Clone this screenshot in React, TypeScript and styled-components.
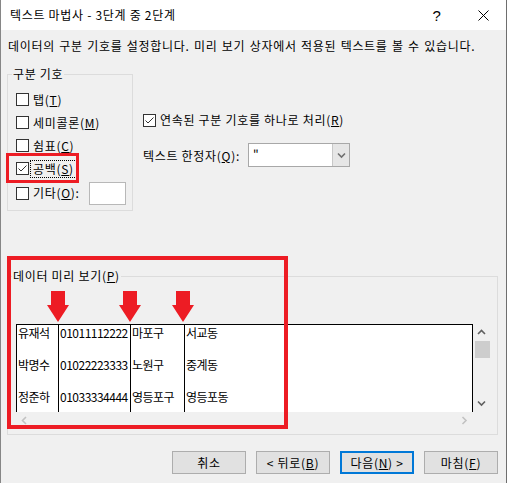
import React from "react";
import styled, { createGlobalStyle } from "styled-components";

const GlobalStyle = createGlobalStyle`
  html, body {
    margin: 0;
    padding: 0;
    background: #ffffff;
  }

  body {
    font-family: "Noto Sans CJK KR", "Noto Sans", sans-serif;
    font-size: 12px;
    letter-spacing: 0.7px;
    color: #000000;
  }

  * {
    box-sizing: border-box;
  }
`;

const columns = [
  { width: 42, cells: ["유재석", "박명수", "정준하"] },
  { width: 72, cells: ["01011112222", "01022223333", "01033334444"] },
  { width: 54, cells: ["마포구", "노원구", "영등포구"] },
  { width: 0, cells: ["서교동", "중계동", "영등포동"] },
];

const arrowCenters = [58, 130, 183];

function CheckBox({ checked }: { checked?: boolean }) {
  return (
    <Box>
      {checked && (
        <svg width="11" height="11" viewBox="0 0 11 11">
          <path d="M1.5 5.5 L4 8 L9.5 2.5" fill="none" stroke="#333" strokeWidth="1" />
        </svg>
      )}
    </Box>
  );
}

function Chevron({ dir, color }: { dir: "up" | "down" | "left" | "right"; color: string }) {
  const paths = {
    up: "M1 5 L4.5 1.5 L8 5",
    down: "M1 1.5 L4.5 5 L8 1.5",
    left: "M5 1 L1.5 4.5 L5 8",
    right: "M1.5 1 L5 4.5 L1.5 8",
  };
  const vertical = dir === "up" || dir === "down";
  return (
    <svg width={vertical ? 9 : 7} height={vertical ? 7 : 9} viewBox={vertical ? "0 0 9 7" : "0 0 7 9"}>
      <path d={paths[dir]} fill="none" stroke={color} strokeWidth="1.6" />
    </svg>
  );
}

export default function App() {
  return (
    <>
      <GlobalStyle />
      <Window>
        <TitleBar>
          <Title>텍스트 마법사 - 3단계 중 2단계</Title>
          <TitleButton>?</TitleButton>
          <TitleButton>
            <svg width="11" height="11" viewBox="0 0 11 11">
              <path d="M0.5 0.5 L10.5 10.5 M10.5 0.5 L0.5 10.5" stroke="#000" strokeWidth="1" />
            </svg>
          </TitleButton>
        </TitleBar>

        <Body>
          <Intro>데이터의 구분 기호를 설정합니다. 미리 보기 상자에서 적용된 텍스트를 볼 수 있습니다.</Intro>

          <OptionsRow>
            <GroupBox $width={126}>
              <Legend>구분 기호</Legend>
              <CheckRow>
                <CheckBox />
                <Label>
                  탭(<Key>T</Key>)
                </Label>
              </CheckRow>
              <CheckRow>
                <CheckBox />
                <Label>
                  세미콜론(<Key>M</Key>)
                </Label>
              </CheckRow>
              <CheckRow>
                <CheckBox />
                <Label>
                  쉼표(<Key>C</Key>)
                </Label>
              </CheckRow>
              <CheckRow>
                <CheckBox checked />
                <Label $focused>
                  공백(<Key>S</Key>)
                </Label>
              </CheckRow>
              <CheckRow $tall>
                <CheckBox />
                <Label>
                  기타(<Key>O</Key>):
                </Label>
                <OtherInput />
              </CheckRow>
            </GroupBox>

            <SideColumn>
              <CheckRow $compact>
                <CheckBox checked />
                <Label>
                  연속된 구분 기호를 하나로 처리(<Key>R</Key>)
                </Label>
              </CheckRow>
              <ComboRow>
                <span>
                  텍스트 한정자(<Key>Q</Key>):
                </span>
                <Combo>
                  <ComboValue>"</ComboValue>
                  <ComboButton>
                    <Chevron dir="down" color="#707070" />
                  </ComboButton>
                </Combo>
              </ComboRow>
            </SideColumn>
          </OptionsRow>

          <PreviewGroup>
            <Legend>
              데이터 미리 보기(<Key>P</Key>)
            </Legend>
            <ScrollView>
              <PreviewPane>
                {columns.map((col, i) => (
                  <Column key={i} $width={col.width}>
                    {col.cells.map((cell) => (
                      <Cell key={cell}>{cell}</Cell>
                    ))}
                  </Column>
                ))}
              </PreviewPane>
              <VScroll>
                <ScrollArrow>
                  <Chevron dir="up" color="#606060" />
                </ScrollArrow>
                <Thumb />
                <ScrollArrow>
                  <Chevron dir="down" color="#606060" />
                </ScrollArrow>
              </VScroll>
              <HScroll>
                <Chevron dir="left" color="#c2c2c2" />
                <Chevron dir="right" color="#c2c2c2" />
              </HScroll>
              <Corner />
            </ScrollView>
          </PreviewGroup>

          <ButtonBar>
            <Button>취소</Button>
            <Button>
              &lt; 뒤로(<Key>B</Key>)
            </Button>
            <Button $primary>
              다음(<Key>N</Key>) &gt;
            </Button>
            <Button>
              마침(<Key>F</Key>)
            </Button>
          </ButtonBar>
        </Body>

        <Highlight $left={6} $top={153} $width={73} $height={30} $thickness={3} />
        <Highlight $left={7} $top={256} $width={281} $height={173} $thickness={4} />
        {arrowCenters.map((x) => (
          <Arrow key={x} style={{ left: x - 11 }} width="22" height="31" viewBox="0 0 22 31">
            <polygon points="4,0 18,0 18,14 22,14 11,31 0,14 4,14" fill="#ed1c24" />
          </Arrow>
        ))}
      </Window>
    </>
  );
}

const Window = styled.div`
  position: relative;
  width: 507px;
  height: 483px;
  background: #f0f0f0;
  border-left: 1px solid #868686;
  border-right: 1px solid #6e6e6e;
  overflow: hidden;
`;

const TitleBar = styled.div`
  display: flex;
  align-items: center;
  height: 30px;
  padding-left: 9px;
  background: #ffffff;
`;

const Title = styled.div`
  flex: 1;
  font-size: 12px;
  line-height: 16px;
`;

const TitleButton = styled.div`
  display: flex;
  align-items: center;
  justify-content: center;
  width: 46px;
  height: 30px;
  font-family: "Liberation Sans", sans-serif;
  font-size: 15px;
`;

const Body = styled.div`
  display: flex;
  flex-direction: column;
  padding: 0 8px 0 6px;
`;

const Intro = styled.div`
  margin-top: 8px;
  padding-left: 1px;
  line-height: 16px;
  word-spacing: 1px;
  white-space: nowrap;
`;

const OptionsRow = styled.div`
  display: flex;
  margin-top: 12px;
`;

const GroupBox = styled.fieldset<{ $width: number }>`
  width: ${({ $width }) => $width}px;
  min-width: 0;
  margin: 0;
  padding: 6px 6px 4px 8px;
  border: 1px solid #dcdcdc;
  display: flex;
  flex-direction: column;
`;

const Legend = styled.legend`
  margin-left: -4px;
  padding: 0 1px;
  line-height: 16px;
`;

const CheckRow = styled.div<{ $tall?: boolean; $compact?: boolean }>`
  display: flex;
  align-items: center;
  height: ${({ $tall, $compact }) => ($tall ? 26 : $compact ? 16 : 23)}px;
  white-space: nowrap;
`;

const Box = styled.div`
  display: flex;
  align-items: center;
  justify-content: center;
  flex: none;
  width: 13px;
  height: 13px;
  border: 1px solid #333333;
  background: #ffffff;
`;

const Label = styled.span<{ $focused?: boolean }>`
  margin-left: ${({ $focused }) => ($focused ? 2 : 4)}px;
  padding: ${({ $focused }) => ($focused ? "0 2px" : "0")};
  line-height: 16px;
  outline: ${({ $focused }) => ($focused ? "1px dotted #000" : "none")};
`;

const Key = styled.span`
  text-decoration: underline;
  text-underline-offset: 1px;
`;

const OtherInput = styled.div`
  width: 37px;
  height: 23px;
  margin-left: auto;
  border: 1px solid #b8b8b8;
  background: #ffffff;
`;

const SideColumn = styled.div`
  display: flex;
  flex-direction: column;
  gap: 15px;
  margin-left: 10px;
  padding-top: 46px;
`;

const ComboRow = styled.div`
  display: flex;
  align-items: center;
  gap: 8px;
  height: 24px;
  white-space: nowrap;
`;

const Combo = styled.div`
  display: flex;
  width: 102px;
  height: 24px;
  border: 1px solid #a8a8a8;
  background: #ffffff;
`;

const ComboValue = styled.div`
  flex: 1;
  padding: 2px 4px;
  line-height: 16px;
`;

const ComboButton = styled.div`
  display: flex;
  align-items: center;
  justify-content: center;
  width: 17px;
  background: #e6e6e6;
  border-left: 1px solid #c8c8c8;
`;

const PreviewGroup = styled.fieldset`
  min-width: 0;
  margin: 57px 0 0;
  padding: 40px 8px 5px 8px;
  border: 1px solid #dcdcdc;
`;

const ScrollView = styled.div`
  display: grid;
  grid-template-columns: 457px 17px;
  grid-template-rows: 88px 17px;
`;

const PreviewPane = styled.div`
  display: flex;
  overflow: hidden;
  background: #ffffff;
  border: 1px solid #000000;
  border-bottom: none;
`;

const Column = styled.div<{ $width: number }>`
  display: flex;
  flex-direction: column;
  flex: ${({ $width }) => ($width ? `0 0 ${$width}px` : "1")};
  border-right: ${({ $width }) => ($width ? "1px solid #000" : "none")};
`;

const Cell = styled.div`
  flex: none;
  height: 32px;
  padding-left: 1px;
  font-size: 12px;
  line-height: 16px;
  letter-spacing: -0.5px;
  white-space: nowrap;
`;

const VScroll = styled.div`
  display: flex;
  flex-direction: column;
  justify-content: space-between;
`;

const ScrollArrow = styled.div`
  display: flex;
  align-items: center;
  justify-content: center;
  height: 17px;
`;

const Thumb = styled.div`
  height: 17px;
  margin: 0 0 auto 2px;
  background: #cdcdcd;
`;

const HScroll = styled.div`
  display: flex;
  align-items: center;
  justify-content: space-between;
  padding: 0 5px 0 5px;
`;

const Corner = styled.div`
  background: #f0f0f0;
`;

const ButtonBar = styled.div`
  display: flex;
  justify-content: flex-end;
  gap: 10px;
  margin-top: 16px;
`;

const Button = styled.div<{ $primary?: boolean }>`
  display: flex;
  align-items: center;
  justify-content: center;
  width: 74px;
  height: 23px;
  background: #e1e1e1;
  border: ${({ $primary }) => ($primary ? "2px solid #0078d7" : "1px solid #adadad")};
  line-height: 16px;
  white-space: nowrap;
`;

const Highlight = styled.div<{ $left: number; $top: number; $width: number; $height: number; $thickness: number }>`
  position: absolute;
  left: ${({ $left }) => $left - 1}px;
  top: ${({ $top }) => $top}px;
  width: ${({ $width }) => $width}px;
  height: ${({ $height }) => $height}px;
  border: ${({ $thickness }) => $thickness}px solid #ed1c24;
  pointer-events: none;
`;

const Arrow = styled.svg`
  position: absolute;
  top: 291px;
  margin-left: -1px;
`;
